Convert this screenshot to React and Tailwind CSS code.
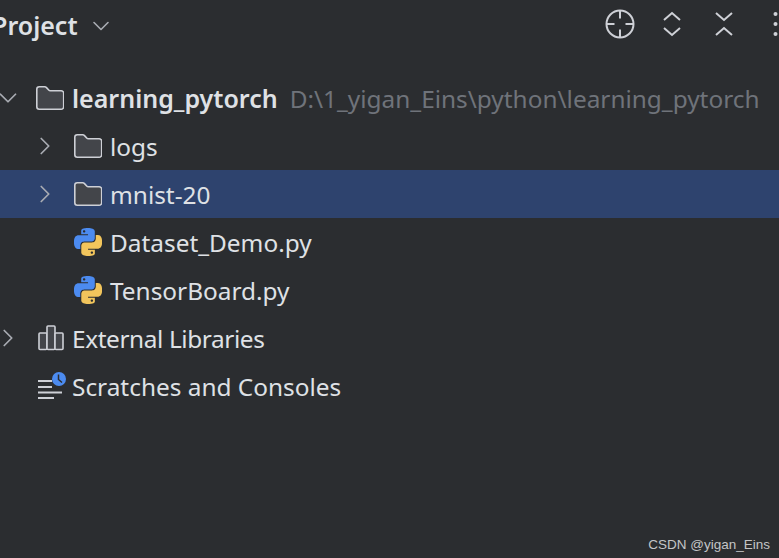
import { ChevronDown, ChevronRight } from 'lucide-react';

const FONT = 'font-["Noto_Sans","Open_Sans",sans-serif]';

const PYTHON_BLUE =
  'M14.25.18l.9.2.73.26.59.3.45.32.34.34.25.34.16.33.1.3.04.26.02.2-.01.13V8.5l-.05.63-.13.55-.21.46-.26.38-.3.31-.33.25-.35.19-.35.14-.33.1-.3.07-.26.04-.21.02H8.77l-.69.05-.59.14-.5.22-.41.27-.33.32-.27.35-.2.36-.15.37-.1.35-.07.32-.04.27-.02.21v3.06H3.17l-.21-.03-.28-.07-.32-.12-.35-.18-.36-.26-.36-.36-.35-.46-.32-.59-.28-.73-.21-.88-.14-1.05-.05-1.23.06-1.22.16-1.04.24-.87.32-.71.36-.57.4-.44.42-.33.42-.24.4-.16.36-.1.32-.05.24-.01h.16l.06.01h8.16v-.83H6.18l-.01-2.75-.02-.37.05-.34.11-.31.17-.28.25-.26.31-.23.38-.2.44-.18.51-.15.58-.12.64-.1.71-.06.77-.04.84-.02 1.27.05zm-6.3 1.98l-.23.33-.08.41.08.41.23.34.33.22.41.09.41-.09.33-.22.23-.34.08-.41-.08-.41-.23-.33-.33-.22-.41-.09-.41.09z';
const PYTHON_YELLOW =
  'M21.1 6.11l.28.06.32.12.35.18.36.27.36.35.35.47.32.59.28.73.21.88.14 1.04.05 1.23-.06 1.23-.16 1.04-.24.86-.32.71-.36.57-.4.45-.42.33-.42.24-.4.16-.36.09-.32.05-.24.02-.16-.01h-8.22v.82h5.84l.01 2.76.02.36-.05.34-.11.31-.17.29-.25.25-.31.24-.38.2-.44.17-.51.15-.58.13-.64.09-.71.07-.77.04-.84.01-1.27-.04-1.07-.14-.9-.2-.73-.25-.59-.3-.45-.33-.34-.34-.25-.34-.16-.33-.1-.3-.04-.25-.02-.2.01-.13v-5.34l.05-.64.13-.54.21-.46.26-.38.3-.32.33-.24.35-.2.35-.14.33-.1.3-.06.26-.04.21-.02.13-.01h5.84l.69-.05.59-.14.5-.21.41-.28.33-.32.27-.35.2-.36.15-.36.1-.35.07-.32.04-.28.02-.21V6.07h2.09l.14.01zm-6.53 14.25l-.23.33-.08.41.08.41.23.33.33.23.41.08.41-.08.33-.23.23-.33.08-.41-.08-.41-.23-.33-.33-.23-.41-.08-.41.08z';

function FolderIcon() {
  return (
    <svg width="28" height="24" viewBox="0 0 28 24" className="shrink-0">
      <path
        d="M.8 3.3A2.5 2.5 0 0 1 3.3.8h5.4c.7 0 1.3.3 1.8.8l2.2 2.400c.4.5 1 .8 1.700.8h10.800a2.500 2.500 0 0 1 2.500 2.500v13.400a2.500 2.500 0 0 1-2.500 2.500H3.300a2.500 2.500 0 0 1-2.500-2.500z"
        fill="#43454a"
        stroke="#ced0d6"
        strokeWidth="1.6"
      />
    </svg>
  );
}

function PythonIcon() {
  return (
    <svg width="28" height="28" viewBox="0 0 24 24" className="shrink-0">
      <path d={PYTHON_BLUE} fill="#4c8bf0" fillRule="evenodd" />
      <path d={PYTHON_YELLOW} fill="#f2c55c" fillRule="evenodd" />
    </svg>
  );
}

function LibraryIcon() {
  return (
    <svg width="26" height="26" viewBox="0 0 26 26" className="ml-[2px] shrink-0">
      <g fill="#43454a" stroke="#ced0d6" strokeWidth="1.6" strokeLinejoin="round">
        <rect x="1" y="8" width="8" height="16.500" rx="1" />
        <rect x="9" y="1" width="8" height="23.500" rx="1" />
        <rect x="17" y="8" width="8" height="16.500" rx="1" />
      </g>
    </svg>
  );
}

function ScratchIcon() {
  return (
    <svg width="30" height="28" viewBox="0 0 30 28" className="ml-[1px] shrink-0">
      <g stroke="#ced0d6" strokeWidth="1.800">
        <path d="M1 9h14M1 15h14M1 20.500h24M1 26h16" />
      </g>
      <circle cx="22" cy="7" r="7" fill="#4c8bf0" />
      <path d="M21.500 2.500V7.500l3.500 3" fill="none" stroke="#2b2d30" strokeWidth="1.500" />
    </svg>
  );
}

function Row({ depth = 0, arrow, icon, selected, children }) {
  return (
    <div className={`flex h-12 items-center ${selected ? 'bg-[#2e436e]' : ''} ${depth ? 'pl-[38px]' : 'pl-0'}`}>
      <div className="flex w-[36px] shrink-0 items-center">
        {arrow === 'right' && <ChevronRight size={30} strokeWidth={1.400} color="#a8abb2" className={`shrink-0 ${depth ? '-ml-[8px]' : '-ml-[7px]'}`} />}
        {arrow === 'down' && <ChevronDown size={30} strokeWidth={1.400} color="#a8abb2" className="-ml-[7px] shrink-0" />}
      </div>
      <div className="flex w-[36px] shrink-0 items-center">{icon}</div>
      <div className="flex min-w-0 items-baseline whitespace-nowrap pt-[2px] text-[24.400px] text-[#dfe1e5]">{children}</div>
    </div>
  );
}

export default function App() {
  return (
    <div className={`relative h-[558px] w-[779px] overflow-hidden bg-[#2b2d30] ${FONT}`}>
      <header className="flex h-[74px] items-start pt-[3px]">
        <span className="-ml-[8px] text-[25px] font-semibold leading-[44px] text-[#dfe1e5]">Project</span>
        <ChevronDown size={28} strokeWidth={1.400} color="#a8abb2" className="ml-[9px] mt-[9px]" />
        <div className="ml-auto flex items-center pt-[6px]">
          <svg width="30" height="30" viewBox="0 0 30 30" fill="none" stroke="#ced0d6" strokeWidth="2">
            <circle cx="15" cy="15" r="13.500" />
            <path d="M15 1.500v8M15 20.500v8M1.500 15h8M20.500 15h8" />
          </svg>
          <svg width="18" height="26" viewBox="0 0 18 26" fill="none" stroke="#ced0d6" strokeWidth="2" className="ml-[28px]">
            <path d="M1 9l8-7 8 7M1 17l8 7 8-7" />
          </svg>
          <svg width="18" height="26" viewBox="0 0 18 26" fill="none" stroke="#ced0d6" strokeWidth="2" className="ml-[34px]">
            <path d="M1 2l8 7 8-7M1 24l8-7 8 7" />
          </svg>
          <svg width="5" height="26" viewBox="0 0 5 26" fill="#ced0d6" className="ml-[40px] mr-[1px]">
            <circle cx="2.500" cy="3" r="2" />
            <circle cx="2.500" cy="13" r="2" />
            <circle cx="2.500" cy="23" r="2" />
          </svg>
        </div>
      </header>

      <Row arrow="down" icon={<FolderIcon />}>
        <span className="text-[25px] font-semibold">learning_pytorch</span>
        <span className="ml-[12px] text-[#6f737a]">D:\1_yigan_Eins\python\learning_pytorch</span>
      </Row>
      <Row depth={1} arrow="right" icon={<FolderIcon />}>logs</Row>
      <Row depth={1} arrow="right" icon={<FolderIcon />} selected>mnist-20</Row>
      <Row depth={1} icon={<PythonIcon />}>Dataset_Demo.py</Row>
      <Row depth={1} icon={<PythonIcon />}>TensorBoard.py</Row>
      <Row arrow="right" icon={<LibraryIcon />}>
        <span className="tracking-[-0.4px]">External Libraries</span>
      </Row>
      <Row icon={<ScratchIcon />}>Scratches and Consoles</Row>

      <span className='absolute right-[9px] bottom-[3px] font-["Liberation_Sans",sans-serif] text-[13.500px] font-light text-[#c4c5c7]'>CSDN @yigan_Eins</span>
    </div>
  );
}
